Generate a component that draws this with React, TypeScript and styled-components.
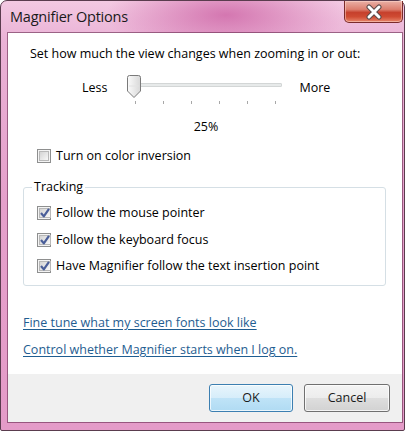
import React from "react";
import styled, { createGlobalStyle } from "styled-components";

const Global = createGlobalStyle`
  html, body { margin: 0; padding: 0; background: #ffffff; }
  body { font-family: "Open Sans", "Noto Sans", sans-serif; font-size: 12.5px; color: #000; }
  * { box-sizing: border-box; }
`;

const Window = styled.div`
  width: 405px;
  height: 431px;
  border: 1px solid #5a3c4e;
  border-radius: 7px 7px 2px 2px;
  padding: 0 1px 7px 6px;
  display: flex;
  flex-direction: column;
  background:
    radial-gradient(ellipse 120px 40px at 225px 14px, rgba(205, 100, 165, 0.8), rgba(205, 100, 165, 0) 100%),
    linear-gradient(180deg, #f3c9e2 0px, #eab2d6 40px, #e5a0cb 200px, #e49bc8 431px);
`;

const TitleBar = styled.div`
  height: 31px;
  display: flex;
  align-items: flex-start;
  justify-content: space-between;
  padding-left: 3px;
`;

const Title = styled.div`
  font-size: 14.5px;
  line-height: 18px;
  margin-top: 7px;
  color: #1a1a1a;
  letter-spacing: -0.2px;
`;

const CloseButton = styled.div`
  width: 59px;
  height: 22px;
  border: 1px solid #7a2b2b;
  border-top: none;
  border-radius: 0 0 5px 5px;
  display: flex;
  align-items: center;
  justify-content: center;
  background: linear-gradient(180deg, #eab0a6 0%, #dc7e6e 40%, #c6402c 55%, #cf4b33 75%, #e8876c 100%);
  box-shadow: inset 0 0 0 1px rgba(255, 220, 210, 0.5);
`;

const Inner = styled.div`
  flex: 1;
  display: flex;
  flex-direction: column;
  border: 1px solid rgba(90, 30, 65, 0.55);
`;

const Client = styled.div`
  flex: 1;
  background: #ffffff;
  display: flex;
  flex-direction: column;
`;

const Intro = styled.div`
  line-height: 16px;
  margin: 13px 0 0 22px;
`;

const SliderRow = styled.div`
  display: flex;
  align-items: flex-start;
  margin: 13px 0 0 74px;
`;

const SliderLabel = styled.div<{ $gap: number }>`
  line-height: 16px;
  margin-top: 5px;
  margin-left: ${(p) => p.$gap}px;
  margin-right: ${(p) => (p.$gap ? 0 : 20)}px;
`;

const Track = styled.div`
  position: relative;
  width: 155px;
  height: 30px;
`;

const TrackLine = styled.div`
  position: absolute;
  left: 3px;
  right: 0;
  top: 8px;
  height: 4px;
  background: #e7eaea;
  border: 1px solid #d3d6d6;
  border-radius: 1px;
`;

const Thumb = styled.svg`
  position: absolute;
  left: 0;
  top: 0;
`;

const Ticks = styled.div`
  position: absolute;
  left: 0;
  right: 0;
  top: 26px;
  display: flex;
  justify-content: space-between;
  padding: 0 6px 0 8px;
`;

const Tick = styled.span`
  width: 1px;
  height: 3px;
  background: #a8a8a8;
`;

const Percent = styled.div`
  line-height: 16px;
  text-align: center;
  margin-top: 14px;
  padding-left: 2px;
`;

const CheckRow = styled.label<{ $top: number }>`
  display: flex;
  align-items: center;
  gap: 5px;
  line-height: 16px;
  margin-top: ${(p) => p.$top}px;
`;

const Box = styled.span`
  width: 14px;
  height: 14px;
  border: 1px solid #8e8f8f;
  background: #f4f4f4;
  padding: 1px;
  display: flex;
  flex-shrink: 0;
`;

const BoxInner = styled.span`
  flex: 1;
  border: 1px solid #b8b8b8;
  background: linear-gradient(135deg, #d4d4d4 0%, #e9e9e9 60%, #f8f8f8 100%);
  display: flex;
  align-items: center;
  justify-content: center;
`;

const Standalone = styled.div`
  margin-left: 29px;
`;

const Group = styled.fieldset`
  margin: 15px 16px 0 15px;
  padding: 0 13px 11px 13px;
  border: 1px solid #d5dfe5;
  border-radius: 3px;
  min-width: 0;
`;

const Legend = styled.legend`
  padding: 0 2px;
  margin-left: -5px;
  line-height: 16px;
`;

const LinkText = styled.a<{ $top: number }>`
  display: block;
  width: max-content;
  margin: ${(p) => p.$top}px 0 0 15px;
  line-height: 16px;
  color: #1f5d91;
  text-decoration: underline;
  text-underline-offset: 2px;
`;

const Footer = styled.div`
  height: 48px;
  background: #f0f0f0;
  display: flex;
  justify-content: flex-end;
  align-items: flex-start;
  gap: 11px;
  padding: 10px 12px 0 0;
`;

const Button = styled.div<{ $primary?: boolean; $w: number }>`
  width: ${(p) => p.$w}px;
  height: 28px;
  border-radius: 3px;
  border: 1px solid ${(p) => (p.$primary ? "#3c7fb1" : "#707070")};
  background: ${(p) =>
    p.$primary
      ? "linear-gradient(180deg, #e8f5fc 0%, #d6edfa 50%, #bfe3f7 51%, #b0dbf3 100%)"
      : "linear-gradient(180deg, #f4f4f4 0%, #ececec 50%, #dedede 51%, #d2d2d2 100%)"};
  box-shadow: inset 0 0 0 1px rgba(255, 255, 255, 0.75);
  display: flex;
  align-items: center;
  justify-content: center;
  line-height: 16px;
  color: #1a1a1a;
`;

const Check = ({ checked }: { checked: boolean }) => (
  <Box>
    <BoxInner>
      {checked && (
        <svg width="10" height="10" viewBox="0 0 10 10">
          <path d="M1 5 L3.8 8.4 L9 0.8" fill="none" stroke="#4a5e99" strokeWidth="2.2" strokeLinejoin="round" />
        </svg>
      )}
    </BoxInner>
  </Box>
);

export default function App() {
  return (
    <>
      <Global />
      <Window>
        <TitleBar>
          <Title>Magnifier Options</Title>
          <CloseButton>
            <svg width="20" height="16" viewBox="0 0 20 16">
              <path d="M5 3 L15 13 M15 3 L5 13" stroke="#5a4a4a" strokeWidth="5" strokeLinecap="round" />
              <path d="M5 3 L15 13 M15 3 L5 13" stroke="#ffffff" strokeWidth="3" strokeLinecap="round" />
            </svg>
          </CloseButton>
        </TitleBar>
        <Inner>
          <Client>
            <Intro>Set how much the view changes when zooming in or out:</Intro>
            <SliderRow>
              <SliderLabel $gap={0}>Less</SliderLabel>
              <Track>
                <TrackLine />
                <Ticks>
                  {[0, 1, 2, 3, 4, 5].map((i) => (
                    <Tick key={i} />
                  ))}
                </Ticks>
                <Thumb width="14" height="23" viewBox="0 0 14 23">
                  <defs>
                    <linearGradient id="tg" x1="0" y1="0" x2="1" y2="0">
                      <stop offset="0" stopColor="#fbfbfb" />
                      <stop offset="1" stopColor="#d8d8d8" />
                    </linearGradient>
                  </defs>
                  <path
                    d="M0.5 2.5 Q0.5 0.5 2.5 0.5 H11.5 Q13.5 0.5 13.5 2.5 V16 L7 22.5 L0.5 16 Z"
                    fill="url(#tg)"
                    stroke="#7a7a7a"
                  />
                  <path d="M2 11 H12" stroke="#e2e2e2" />
                </Thumb>
              </Track>
              <SliderLabel $gap={17}>More</SliderLabel>
            </SliderRow>
            <Percent>25%</Percent>
            <Standalone>
              <CheckRow $top={13}>
                <Check checked={false} />
                Turn on color inversion
              </CheckRow>
            </Standalone>
            <Group>
              <Legend>Tracking</Legend>
              <CheckRow $top={10}>
                <Check checked />
                Follow the mouse pointer
              </CheckRow>
              <CheckRow $top={11}>
                <Check checked />
                Follow the keyboard focus
              </CheckRow>
              <CheckRow $top={10}>
                <Check checked />
                Have Magnifier follow the text insertion point
              </CheckRow>
            </Group>
            <LinkText $top={29}>Fine tune what my screen fonts look like</LinkText>
            <LinkText $top={11}>Control whether Magnifier starts when I log on.</LinkText>
          </Client>
          <Footer>
            <Button $primary $w={84}>OK</Button>
            <Button $w={86}>Cancel</Button>
          </Footer>
        </Inner>
      </Window>
    </>
  );
}
